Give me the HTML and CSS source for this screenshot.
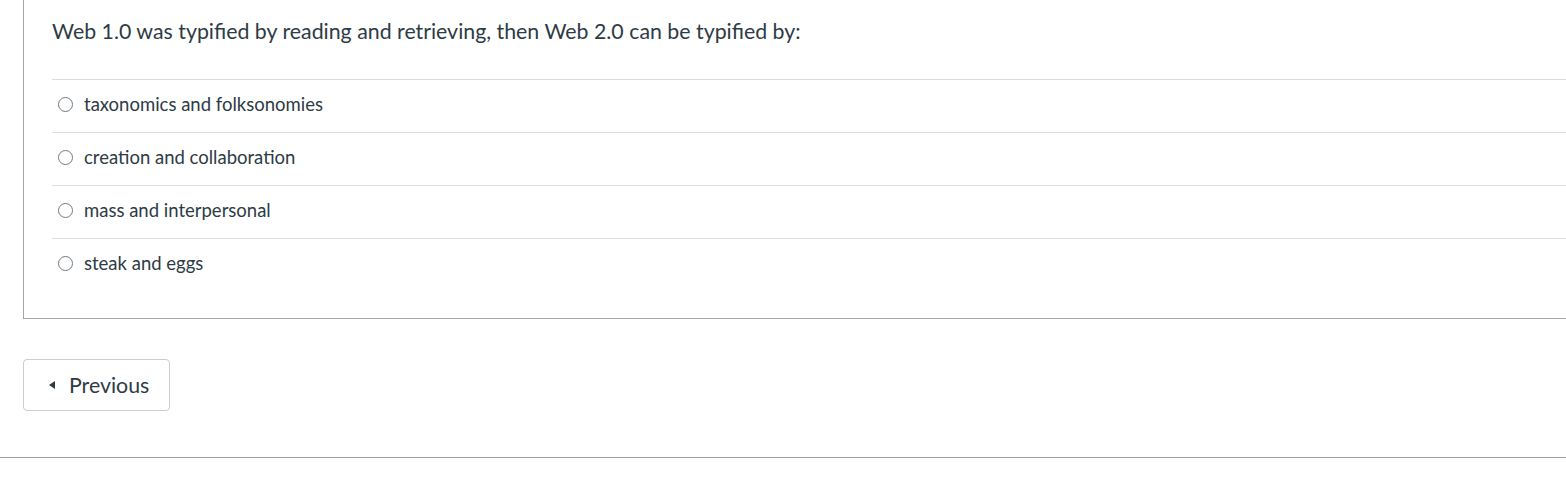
FILE: index.html
```html
<!DOCTYPE html>
<html>
<head>
<meta charset="utf-8">
<link rel="stylesheet" href="styles.css">
</head>
<body>
<div class="page">
  <div class="card">
    <div class="question">Web 1.0 was typified by reading and retrieving, then Web 2.0 can be typified by:</div>
    <div class="answers">
      <label class="answer"><span class="radio"></span><span>taxonomics and folksonomies</span></label>
      <label class="answer"><span class="radio"></span><span>creation and collaboration</span></label>
      <label class="answer"><span class="radio"></span><span>mass and interpersonal</span></label>
      <label class="answer"><span class="radio"></span><span>steak and eggs</span></label>
    </div>
  </div>
  <div class="nav">
    <button class="btn"><span class="caret"></span>Previous</button>
  </div>
  <div class="footer">
    <span class="status">Not saved</span>
    <span class="submit">Submit Quiz</span>
  </div>
</div>
</body>
</html>
```
FILE: styles.css
```css
html, body {
  margin: 0;
  padding: 0;
  background: #fff;
  overflow: hidden;
}
body {
  font-family: Lato, "Liberation Sans", sans-serif;
  color: #2d3b45;
  width: 1566px;
  height: 488px;
}
.page {
  display: flex;
  flex-direction: column;
}
.card {
  margin-left: 23px;
  margin-right: -20px;
  border-left: 1px solid #a6a6a6;
  border-bottom: 1px solid #a6a6a6;
  padding: 0 20px 27px 28px;
}
.question {
  font-size: 21.33px;
  line-height: 28px;
  padding-top: 17px;
  padding-bottom: 34px;
}
.answers {
  display: flex;
  flex-direction: column;
}
.answer {
  display: flex;
  align-items: center;
  height: 52px;
  border-top: 1px solid #dcdcdc;
  font-size: 18.5px;
  gap: 11px;
  padding-left: 6px;
}
.radio {
  width: 13px;
  height: 13px;
  border: 1px solid #6f7a82;
  border-radius: 50%;
  flex: none;
  margin-top: -3px;
}
.answer span:last-child {
  margin-top: -5px;
}
.nav {
  padding: 40px 0 0 23px;
}
.btn {
  font-family: Lato, "Liberation Sans", sans-serif;
  font-size: 21.33px;
  color: #2d3b45;
  background: #fff;
  border: 1px solid #c7cdd1;
  border-radius: 4px;
  width: 147px;
  height: 52px;
  display: flex;
  align-items: center;
  padding: 0 0 0 25px;
  gap: 14px;
  cursor: pointer;
}
.caret {
  width: 0;
  height: 0;
  border-top: 4px solid transparent;
  border-bottom: 4px solid transparent;
  border-right: 6px solid #2d3b45;
}
.footer {
  margin-top: 46px;
  border-top: 1px solid #9e9e9e;
  display: flex;
  justify-content: flex-end;
  gap: 20px;
  padding: 26px 12px 0 0;
  font-size: 14px;
  color: #999;
}
```
